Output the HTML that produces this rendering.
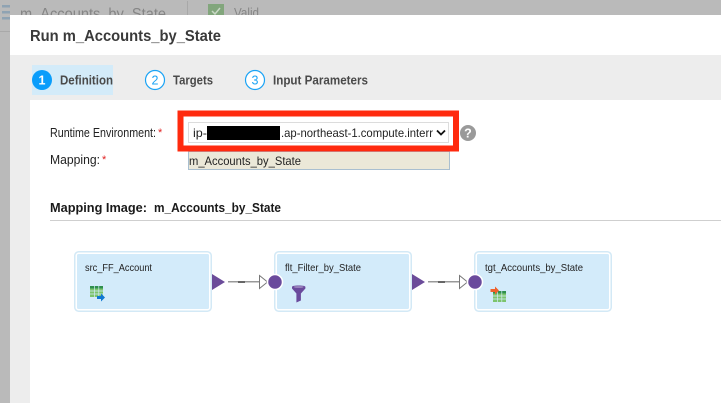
<!DOCTYPE html>
<html>
<head>
<meta charset="utf-8">
<style>
html,body{margin:0;padding:0;width:721px;height:403px;overflow:hidden;background:#fff}
svg{display:block}
text{font-family:"Liberation Sans",sans-serif}
</style>
</head>
<body>
<svg width="721" height="403" viewBox="0 0 721 403" xmlns="http://www.w3.org/2000/svg">
<defs>
<clipPath id="top"><rect x="0" y="0" width="721" height="15"/></clipPath>
</defs>
<!-- backdrop -->
<rect width="721" height="403" fill="#bababa"/>
<rect x="0" y="31" width="10" height="1" fill="#a9a9a9"/>
<rect x="2" y="5" width="8" height="2.500" fill="#8fa3b3"/>
<rect x="2" y="11" width="8" height="2.500" fill="#8fa3b3"/>
<rect x="2" y="17" width="8" height="2.500" fill="#8fa3b3"/>
<g clip-path="url(#top)">
<text x="20" y="19" font-size="15.500" fill="#858585" textLength="146" lengthAdjust="spacingAndGlyphs">m_Accounts_by_State</text>
<rect x="187" y="1" width="1" height="14" fill="#a8a8a8"/>
<rect x="208" y="4" width="16" height="14" fill="#82a67c"/>
<path d="M212 11l3 3 5-6" fill="none" stroke="#c9d8c6" stroke-width="1.500"/>
<text x="234" y="17" font-size="12.500" fill="#858585" textLength="25" lengthAdjust="spacingAndGlyphs">Valid</text>
</g>
<!-- dialog -->
<rect x="10" y="15" width="711" height="388" fill="#fff"/>
<rect x="10" y="55" width="711" height="45" fill="#ededed"/>
<rect x="10" y="100" width="20" height="303" fill="#ededed"/>
<text x="30" y="41" font-size="15.500" font-weight="bold" fill="#3a3a3a" textLength="191" lengthAdjust="spacingAndGlyphs">Run m_Accounts_by_State</text>
<!-- steps -->
<rect x="32" y="65" width="81" height="30" fill="#d3ebf9"/>
<circle cx="42" cy="80" r="10" fill="#0a9dfb"/>
<text x="42" y="84.500" font-size="12.500" font-weight="bold" fill="#fff" text-anchor="middle">1</text>
<text x="60" y="84.500" font-size="12.500" font-weight="bold" fill="#4a4a4a" textLength="53" lengthAdjust="spacingAndGlyphs">Definition</text>
<circle cx="155" cy="80" r="9.500" fill="#fff" stroke="#1aa3f5" stroke-width="1.200"/>
<text x="155" y="84.500" font-size="12.500" fill="#1aa3f5" text-anchor="middle">2</text>
<text x="173" y="84.500" font-size="12.500" font-weight="bold" fill="#4a4a4a" textLength="40" lengthAdjust="spacingAndGlyphs">Targets</text>
<circle cx="255" cy="80" r="9.500" fill="#fff" stroke="#1aa3f5" stroke-width="1.200"/>
<text x="255" y="84.500" font-size="12.500" fill="#1aa3f5" text-anchor="middle">3</text>
<text x="273" y="84.500" font-size="12.500" font-weight="bold" fill="#4a4a4a" textLength="95" lengthAdjust="spacingAndGlyphs">Input Parameters</text>
<!-- form -->
<text x="50" y="137" font-size="12.500" fill="#222" textLength="106" lengthAdjust="spacingAndGlyphs">Runtime Environment:</text>
<text x="158" y="136" font-size="11" fill="#e02020">*</text>
<text x="50" y="164" font-size="12.500" fill="#222" textLength="50" lengthAdjust="spacingAndGlyphs">Mapping:</text>
<text x="102" y="163" font-size="11" fill="#e02020">*</text>
<!-- mapping input -->
<rect x="188.500" y="151.500" width="261" height="18" fill="#ebe8d8" stroke="#a9bfd0"/>
<text x="189" y="165" font-size="12" fill="#222" textLength="112" lengthAdjust="spacingAndGlyphs">m_Accounts_by_State</text>
<!-- red box -->
<rect x="180.500" y="113.500" width="275.500" height="35" fill="#fff" stroke="#ff2a0e" stroke-width="6"/>
<rect x="188.500" y="122.500" width="260" height="20" fill="#fff" stroke="#dcdcdc"/>
<text x="193" y="137" font-size="12" fill="#222" textLength="14" lengthAdjust="spacingAndGlyphs">ip-</text>
<rect x="207" y="126" width="73" height="14" fill="#000"/>
<text x="281" y="137" font-size="12" fill="#222" textLength="152" lengthAdjust="spacingAndGlyphs">.ap-northeast-1.compute.interr</text>
<path d="M437 130.500l4 4 4-4" fill="none" stroke="#111" stroke-width="1.800"/>
<circle cx="468" cy="133" r="8" fill="#9a9a9a"/>
<text x="468" y="137.500" font-size="12.500" font-weight="bold" fill="#fff" text-anchor="middle">?</text>
<!-- mapping image -->
<text x="50" y="212" font-size="12.500" font-weight="bold" fill="#1a1a1a" textLength="97" lengthAdjust="spacingAndGlyphs">Mapping Image:</text>
<text x="154" y="212" font-size="12.500" font-weight="bold" fill="#1a1a1a" textLength="127" lengthAdjust="spacingAndGlyphs">m_Accounts_by_State</text>
<rect x="50" y="220" width="671" height="1" fill="#cfcfcf"/>
<!-- nodes -->
<rect x="74.750" y="251.750" width="136.500" height="59.500" rx="4" fill="#fff" stroke="#d3e9f6" stroke-width="1.500"/>
<rect x="77" y="254" width="132" height="55" rx="1.500" fill="#d3ebfa"/>
<rect x="274.750" y="251.750" width="136.500" height="59.500" rx="4" fill="#fff" stroke="#d3e9f6" stroke-width="1.500"/>
<rect x="277" y="254" width="132" height="55" rx="1.500" fill="#d3ebfa"/>
<rect x="474.750" y="251.750" width="136.500" height="59.500" rx="4" fill="#fff" stroke="#d3e9f6" stroke-width="1.500"/>
<rect x="477" y="254" width="132" height="55" rx="1.500" fill="#d3ebfa"/>
<text x="85" y="271" font-size="10.500" fill="#222" textLength="67" lengthAdjust="spacingAndGlyphs">src_FF_Account</text>
<text x="285" y="271" font-size="10.500" fill="#222" textLength="76" lengthAdjust="spacingAndGlyphs">flt_Filter_by_State</text>
<text x="485" y="271" font-size="10.500" fill="#222" textLength="98" lengthAdjust="spacingAndGlyphs">tgt_Accounts_by_State</text>
<!-- connector 1 -->
<path d="M212 274l13 8-13 8z" fill="#6b4c9a"/>
<rect x="228" y="281" width="32" height="1.500" fill="#999"/>
<rect x="238" y="281" width="7" height="2" fill="#666"/>
<path d="M259.500 275.500l8 6.500-8 6.500z" fill="#fff" stroke="#777"/>
<circle cx="275" cy="282" r="7.500" fill="#6a4a9c" stroke="#fff" stroke-width="1.500"/>
<!-- connector 2 -->
<path d="M412 274l13 8-13 8z" fill="#6b4c9a"/>
<rect x="428" y="281" width="32" height="1.500" fill="#999"/>
<rect x="438" y="281" width="7" height="2" fill="#666"/>
<path d="M459.500 275.500l8 6.500-8 6.500z" fill="#fff" stroke="#777"/>
<circle cx="475" cy="282" r="7.500" fill="#6a4a9c" stroke="#fff" stroke-width="1.500"/>
<!-- source icon -->
<rect x="90" y="286" width="13" height="11" fill="#7cc46c"/>
<rect x="90" y="286" width="13" height="2.500" fill="#2f8f4e"/>
<path d="M90 291h13M90 294h13M94.500 286v11M98.800 286v11" stroke="#d3ebfa" stroke-width=".7"/>
<path d="M97 296h4v-2.500l4 4-4 4v-2.500h-4z" fill="#0f78d2"/>
<!-- filter icon -->
<path d="M292 287c0-1 2-1.500 6.700-1.500s6.700.5 6.700 1.500v1.500l-4.500 5v7l-4.500 2v-9l-4.400-5z" fill="#6a4a9c"/>
<ellipse cx="298.700" cy="287" rx="5" ry=".8" fill="#a793c6"/>
<!-- target icon -->
<rect x="493" y="291" width="13" height="11" fill="#7cc46c"/>
<rect x="493" y="291" width="13" height="2.500" fill="#2f8f4e"/>
<path d="M493 296h13M493 299h13M497.500 291v11M501.800 291v11" stroke="#d3ebfa" stroke-width=".7"/>
<path d="M490.500 289h4.500v-2.500l4 4-4 4v-2.500h-4.500z" fill="#f0602a"/>
</svg>
</body>
</html>
